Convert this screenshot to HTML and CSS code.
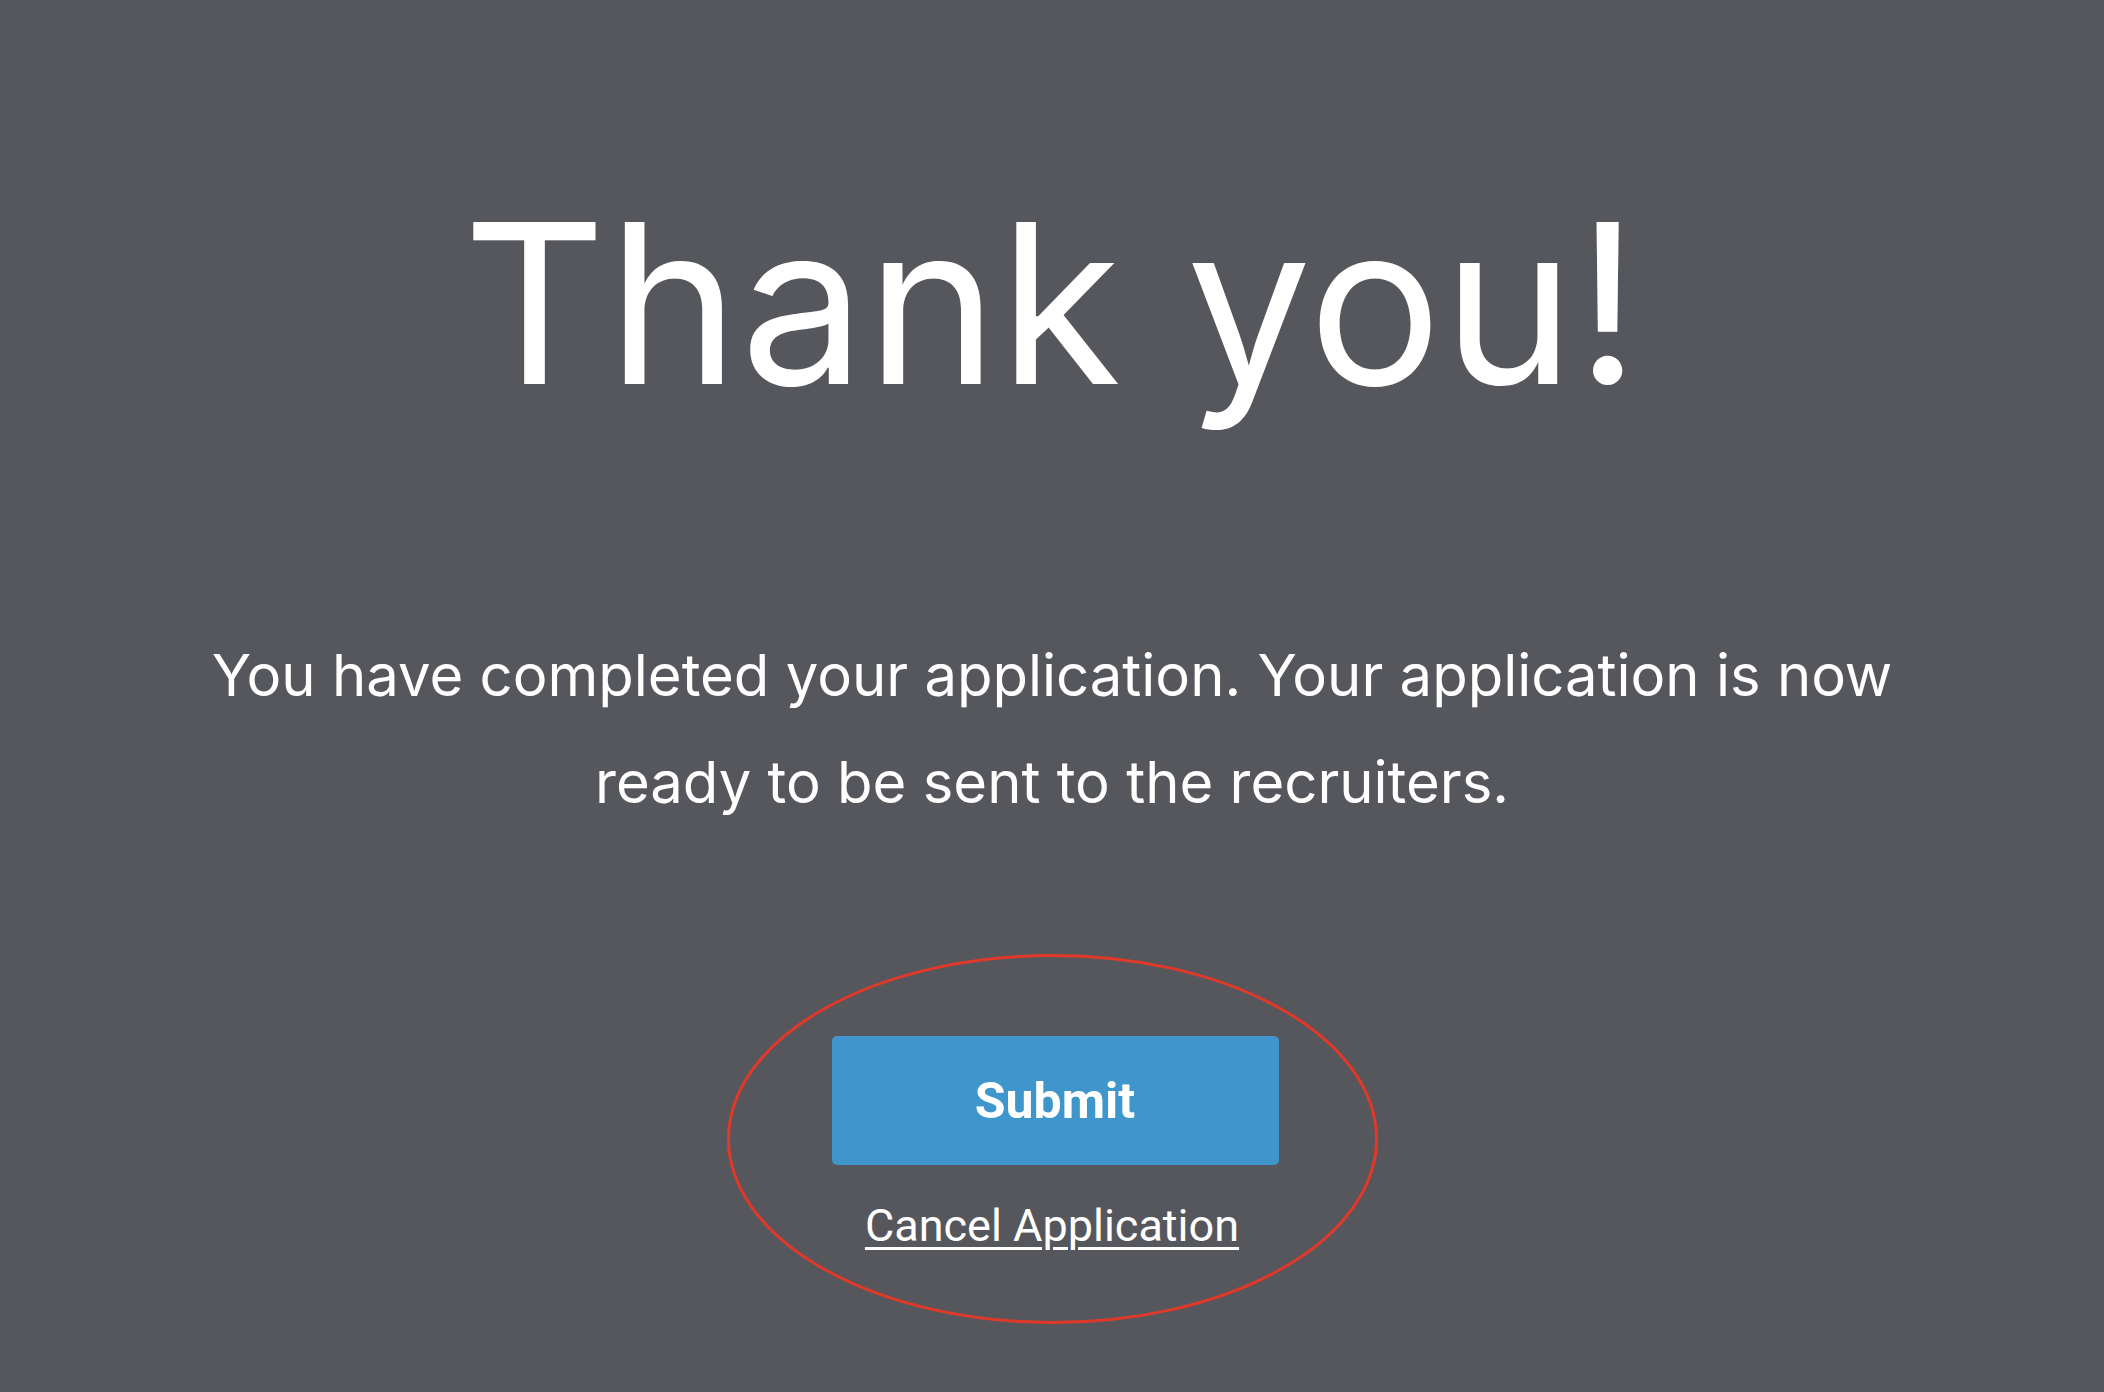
FILE: index.html
```html
<!DOCTYPE html>
<html lang="en">
<head>
<meta charset="utf-8">
<title>Thank you!</title>
<link rel="stylesheet" href="styles.css">
</head>
<body>
<main class="page">
  <h1 class="title">Thank you!</h1>
  <p class="message">You have completed your application. Your application is now ready to be sent to the recruiters.</p>
  <div class="actions">
    <button class="submit" type="button">Submit</button>
    <a class="cancel" href="#">Cancel Application</a>
    <svg class="highlight" width="655" height="374" viewBox="0 0 655 374" aria-hidden="true">
      <ellipse cx="327.5" cy="187" rx="324" ry="183.5" fill="none" stroke="#e0392a" stroke-width="3"/>
    </svg>
  </div>
</main>
</body>
</html>
```

FILE: styles.css
```css
html, body {
  margin: 0;
  padding: 0;
  background: #56575c;
}

body {
  min-height: 1392px;
  color: #ffffff;
  font-family: "Inter", "Open Sans", sans-serif;
}

.page {
  display: flex;
  flex-direction: column;
  align-items: center;
  padding-top: 193px;
}

.title {
  margin: 0;
  font-family: "Inter", sans-serif;
  font-weight: 400;
  font-size: 222px;
  line-height: 1;
  letter-spacing: 1.5px;
  color: #ffffff;
}

.message {
  margin: 207px 0 0;
  max-width: 1720px;
  text-align: center;
  font-family: "Inter", sans-serif;
  font-size: 58px;
  line-height: 107px;
  font-weight: 400;
}

.actions {
  position: relative;
  display: flex;
  flex-direction: column;
  align-items: center;
  margin-top: 200px;
}

.submit {
  width: 447px;
  height: 129px;
  margin-left: 6px;
  border: none;
  border-radius: 5px;
  background: #3f96cc;
  color: #ffffff;
  font-family: "Roboto", sans-serif;
  font-weight: 700;
  font-size: 50px;
  cursor: pointer;
}

.cancel {
  margin-top: 35px;
  color: #ffffff;
  font-family: "Roboto", sans-serif;
  font-size: 45px;
  line-height: 52px;
  text-decoration: underline;
  text-decoration-thickness: 3px;
  text-underline-offset: 6px;
}

.highlight {
  position: absolute;
  top: -84px;
  left: 50%;
  margin-left: -327px;
  pointer-events: none;
}
```
